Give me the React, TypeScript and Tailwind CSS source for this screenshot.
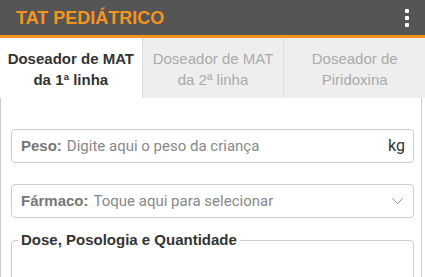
import React from "react";

const tabs = [
  { lines: ["Doseador de MAT", "da 1ª linha"], active: true },
  { lines: ["Doseador de MAT", "da 2ª linha"], active: false },
  { lines: ["Doseador de", "Piridoxina"], active: false },
];

const roboto = { fontFamily: 'Roboto, "Liberation Sans", sans-serif' };

export default function App() {
  return (
    <div
      className="w-[425px] h-[277px] overflow-hidden bg-white"
      style={{ fontFamily: '"Liberation Sans", Arial, sans-serif' }}
    >
      <header className="h-[38px] bg-[#555555] border-b-[3px] border-[#f7941d] flex items-center justify-between pl-[16px] pr-[16px]">
        <h1 className="text-[18px] font-bold text-[#f7941d] leading-none">
          TAT PEDIÁTRICO
        </h1>
        <div className="flex flex-col gap-[3px]">
          <span className="w-[4px] h-[4px] bg-white rounded-[1px]" />
          <span className="w-[4px] h-[4px] bg-white rounded-[1px]" />
          <span className="w-[4px] h-[4px] bg-white rounded-[1px]" />
        </div>
      </header>

      <nav className="grid grid-cols-3 h-[60px]">
        {tabs.map((t, i) => (
          <div
            key={i}
            className={
              "flex flex-col items-center justify-center text-[15px] leading-[21px] pt-[1px] " +
              (i > 0 ? "border-l border-[#dddddd] " : "") +
              (t.active
                ? "bg-white font-bold text-[#333333]"
                : "bg-[#eeeeee] text-[#aaaaaa]")
            }
          >
            {t.lines.map((l) => (
              <span key={l}>{l}</span>
            ))}
          </div>
        ))}
      </nav>

      <main className="mr-[3px] border-x border-[#cccccc] pl-[10px] pr-[7px] pt-[31px] h-[179px]">
        <div className="h-[34px] border border-[#cccccc] rounded-[4px] flex items-center px-[9px]">
          <span className="font-bold text-[#777777] text-[15px]">Peso:</span>
          <span className="ml-[5px] text-[#888888] flex-1 text-[15px]" style={roboto}>
            Digite aqui o peso da criança
          </span>
          <span className="text-[#333333] text-[16px] mr-[-1px]" style={roboto}>
            kg
          </span>
        </div>

        <div className="mt-[21px] h-[34px] border border-[#cccccc] rounded-[4px] flex items-center pl-[9px] pr-[9px]">
          <span className="font-bold text-[#777777] text-[15px]">Fármaco:</span>
          <span className="ml-[5px] text-[#888888] flex-1 text-[15px]" style={roboto}>
            Toque aqui para selecionar
          </span>
          <svg width="11" height="7" viewBox="0 0 11 7" className="mr-[1px]">
            <polyline
              points="0.5,0.5 5.5,5.5 10.5,0.5"
              fill="none"
              stroke="#999999"
              strokeWidth="1"
            />
          </svg>
        </div>

        <fieldset className="mt-[13px] h-[80px] border border-[#cccccc] rounded-[4px]">
          <legend className="ml-[6px] px-[3px] text-[15px] font-bold text-[#333333] leading-[18px]">
            Dose, Posologia e Quantidade
          </legend>
        </fieldset>
      </main>
    </div>
  );
}
